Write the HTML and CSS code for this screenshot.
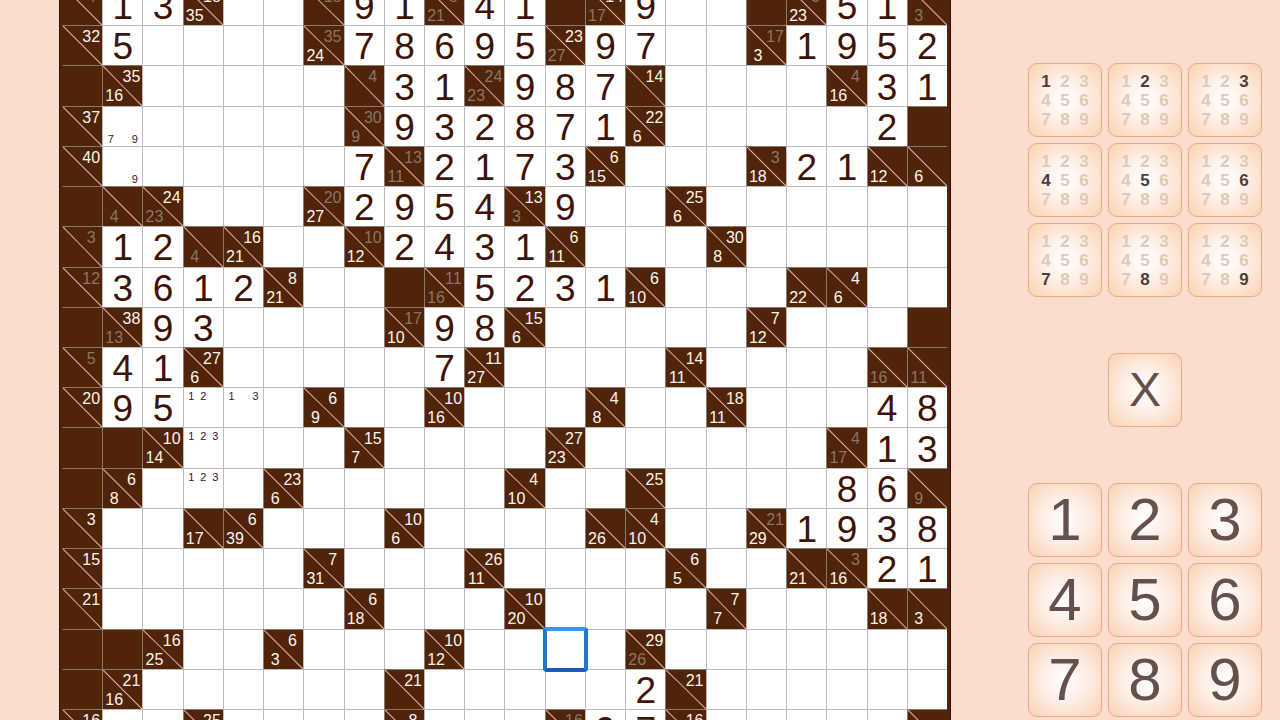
FILE: index.html
```html
<!DOCTYPE html>
<html lang="en">
<head>
  <meta charset="UTF-8" />
  <meta name="viewport" content="width=device-width, initial-scale=1.0" />
  <title>Kakuro</title>
  <link rel="stylesheet" href="styles.css">
</head>
<body>
  <main class="board">
    <div class="grid" id="grid"></div>
  </main>

  <aside class="side">
    <div class="pad" id="notes"></div>
    <div class="pad erase">
      <button class="key key-x" type="button">X</button>
    </div>
    <div class="pad" id="digits"></div>
  </aside>

  <script>
    // "." empty, "#" block, "n12" pencil notes, "*" selected,
    // "down/across" clue, "~" marks a completed sum
    const rows = [
      '/~4 1 3 35/18 . . /~18 9 1 ~21/~8 4 1 # ~17/14 9 . . # 23/~6 5 1 ~3/',
      '/32 5 . . . . 24/~35 7 8 6 9 5 ~27/23 9 7 . . 3/~17 1 9 5 2',
      '# 16/35 . . . . . /~4 3 1 ~23/~24 9 8 7 /14 . . . . 16/~4 3 1',
      '/37 n79 . . . . . ~9/~30 9 3 2 8 7 1 6/22 . . . . . 2 #',
      '/40 n9 . . . . . 7 ~11/~13 2 1 7 3 15/6 . . . 18/~3 2 1 12/ 6/',
      '# ~4/ ~23/24 . . . 27/~20 2 9 5 4 ~3/13 9 . . 6/25 . . . . . .',
      '/~3 1 2 ~4/ 21/16 . . 12/~10 2 4 3 1 11/6 . . . 8/30 . . . . .',
      '/~12 3 6 1 2 21/8 . . # ~16/~11 5 2 3 1 10/6 . . . 22/ 6/4 . .',
      '# ~13/38 9 3 . . . . 10/~17 9 8 6/15 . . . . . 12/7 . . . #',
      '/~5 4 1 6/27 . . . . . 7 27/11 . . . . 11/14 . . . . ~16/ ~11/',
      '/20 9 5 n12 n13 . 9/6 . . 16/10 . . . 8/4 . . 11/18 . . . 4 8',
      '# # 14/10 n123 . . . 7/15 . . . . 23/27 . . . . . . ~17/~4 1 3',
      '# 8/6 . n123 . 6/23 . . . . . 10/4 . . /25 . . . . 8 6 ~9/',
      '/3 . . 17/ 39/6 . . . 6/10 . . . . 26/ 10/4 . . 29/~21 1 9 3 8',
      '/15 . . . . . 31/7 . . . 11/26 . . . . 5/6 . . 21/ 16/~3 2 1',
      '/21 . . . . . . 18/6 . . . 20/10 . . . . 7/7 . . . 18/ 3/',
      '# # 25/16 . . 3/6 . . . 12/10 . . * . ~26/29 . . . . . . .',
      '# 16/21 . . . . . . /21 . . . . . 2 /21 . . . . . .',
      '/16 . . 5/25 . . . . /8 . . . /~16 9 7 /16 . . . . . 3/'
    ];

    function sum(text, side) {
      const done = text.startsWith('~') ? ' done' : '';
      return `<span class="${side}${done}">${text.replace('~', '')}</span>`;
    }

    function nine(shown) {
      return [...'123456789'].map(d => `<span>${shown.includes(d) ? d : ''}</span>`).join('');
    }

    function cell(t) {
      if (t === '#') return '<div class="cell block"></div>';
      if (t.includes('/')) {
        const [down, across] = t.split('/');
        return `<div class="cell block clue">${sum(across, 'across')}${sum(down, 'down')}</div>`;
      }
      if (t[0] === 'n') return `<button type="button" class="cell notes">${nine(t)}</button>`;
      if (t === '*') return '<button type="button" class="cell selected" aria-label="selected"></button>';
      if (t === '.') return '<button type="button" class="cell" aria-label="empty"></button>';
      return `<button type="button" class="cell">${t}</button>`;
    }

    document.getElementById('grid').innerHTML = rows.map(r => r.split(' ').map(cell).join('')).join('');

    const all = [...'123456789'];
    document.getElementById('digits').innerHTML = all.map(d => `<button type="button" class="key">${d}</button>`).join('');
    document.getElementById('notes').innerHTML = all.map(d =>
      `<button type="button" class="key key-note" aria-label="note ${d}">` +
      all.map(n => `<span${n === d ? ' class="on"' : ''}>${n}</span>`).join('') +
      '</button>').join('');
  </script>
</body>
</html>
```
FILE: styles.css
```css
:root {
  --page: #faddcc;
  --brown: #502408;
  --ink: #3f1408;
  --line: rgba(160, 160, 160, 0.7);
  --key-ink: #66504b;
}
* { box-sizing: border-box; }
body {
  margin: 0;
  height: 100vh;
  overflow: hidden;
  display: flex;
  align-items: flex-start;
  gap: 77px;
  padding: 0 18px 0 59px;
  background: var(--page);
  font-family: "Liberation Sans", Arial, sans-serif;
}
button {
  font-family: inherit;
  padding: 0;
  cursor: pointer;
}

/* Board, scrolled a little way down */
.board {
  flex: 1;
  min-width: 0;
  margin-top: -15px;
  padding: 0 3px 0 2px;
  background: var(--brown);
  border: solid #3f0c04;
  border-width: 0 1px;
}
.grid {
  display: grid;
  grid-template-columns: repeat(22, minmax(0, 1fr));
  grid-template-rows: repeat(19, minmax(0, 1fr));
  aspect-ratio: 22 / 19;
}
.cell {
  position: relative;
  display: flex;
  align-items: center;
  justify-content: center;
  border: solid var(--line);
  border-width: 1px 0 0 1px;
  border-radius: 0;
  background: #fff;
  color: var(--ink);
  font-size: 37px;
  line-height: 36px;
  padding-top: 3px;
}
.block { background: var(--brown); }
.cell:nth-child(22n + 1) { border-left-color: transparent; }
.clue {
  flex-direction: column;
  justify-content: flex-start;
  gap: 1px;
  padding-top: 2px;
  background: linear-gradient(to top right, transparent calc(50% - 1px), #d9ab98 50%, transparent calc(50% + 1px)) no-repeat var(--brown);
  color: #fff4ec;
  font-size: 16px;
  line-height: 18px;
}
.clue span { width: 22px; height: 18px; text-align: center; }
.across { align-self: flex-end; }
.down { align-self: flex-start; }
.done { color: #8b7568; }
.notes {
  display: grid;
  grid-template-columns: repeat(3, 12px);
  grid-template-rows: repeat(3, 12px);
  align-content: start;
  padding-top: 2px;
  font-size: 11px;
  line-height: 12px;
}
.selected::after {
  content: '';
  position: absolute;
  inset: -3px;
  z-index: 1;
  border: 4px solid;
  border-color: #3f95e3 #2376cc #195dbc;
  border-radius: 4px;
}

/* Keypads */
.side {
  flex: 0 0 234px;
  padding-top: 63px;
}
.pad {
  display: grid;
  grid-template-columns: repeat(3, 1fr);
  gap: 6px;
}
.erase { margin: 56px 0; }
.key {
  display: flex;
  align-items: center;
  justify-content: center;
  height: 74px;
  border: 1px solid #e6ab86;
  border-radius: 9px;
  background: radial-gradient(circle, #fff 0%, #fdeee5 45%, #fcd0b0 100%);
  color: var(--key-ink);
  font-size: 60px;
  line-height: 60px;
}
.key-x { grid-column: 2; font-size: 48px; }
.key-note {
  display: grid;
  grid-template-columns: repeat(3, 19px);
  grid-template-rows: repeat(3, 19px);
  align-content: center;
  color: #dfcab6;
  font-size: 17px;
  font-weight: bold;
  line-height: 19px;
}
.key-note .on { color: #503c3c; }
```
